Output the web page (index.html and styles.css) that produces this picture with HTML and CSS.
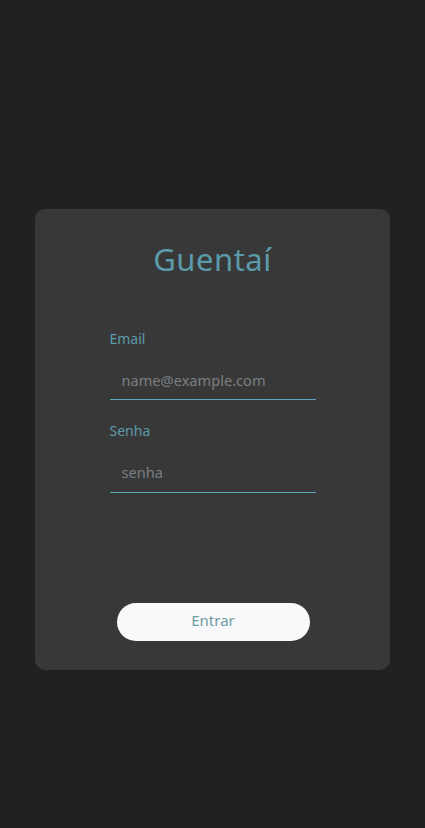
FILE: index.html
```html
<!DOCTYPE html>
<html lang="pt">
<head>
<meta charset="utf-8">
<link rel="stylesheet" href="styles.css">
</head>
<body>
<main class="page">
  <form class="card">
    <h1 class="title">Guentaí</h1>
    <div class="fields">
      <div class="field">
        <label class="label" for="email">Email</label>
        <div class="control">
          <input class="input" id="email" type="text" placeholder="name@example.com">
        </div>
      </div>
      <div class="field">
        <label class="label" for="senha">Senha</label>
        <div class="control">
          <input class="input" id="senha" type="password" placeholder="senha">
        </div>
      </div>
    </div>
    <button class="btn" type="button">Entrar</button>
  </form>
</main>
</body>
</html>
```
FILE: styles.css
```css
* { box-sizing: border-box; }
html, body { margin: 0; padding: 0; }
body {
  background: #212121;
  font-family: "Noto Sans", "DejaVu Sans", sans-serif;
  height: 828px;
}
.page {
  padding-top: 209px;
  padding-left: 35px;
}
.card {
  width: 355px;
  height: 461px;
  background: #383838;
  border-radius: 10px;
  display: flex;
  flex-direction: column;
  align-items: center;
  padding-top: 22px;
}
.title {
  margin: 0;
  font-weight: 400;
  font-size: 31px;
  line-height: 56px;
  color: #5b9aaa;
  letter-spacing: 0.5px;
}
.fields {
  width: 206px;
  margin-top: 43px;
  display: flex;
  flex-direction: column;
  gap: 22px;
}
.field {
  display: flex;
  flex-direction: column;
}
.label {
  font-size: 14px;
  line-height: 18px;
  color: #5b9aaa;
}
.control {
  margin-top: 12px;
  height: 40px;
  border-bottom: 1px solid #58a6b8;
  display: flex;
}
.field + .field .control { height: 41px; }
.input {
  flex: 1;
  min-width: 0;
  background: transparent;
  border: 0;
  padding: 0 12px;
  font-family: inherit;
  font-size: 14.6px;
  color: #aaa;
  outline: none;
}
.input::placeholder { color: #7a7f84; }
.btn {
  margin-top: 110px;
  width: 193px;
  height: 38px;
  padding: 0 0 4px;
  border: none;
  border-radius: 19px;
  background: #f8f9fa;
  font-family: inherit;
  font-size: 15px;
  color: #6e9aa4;
  margin-left: 1px;
}
```
